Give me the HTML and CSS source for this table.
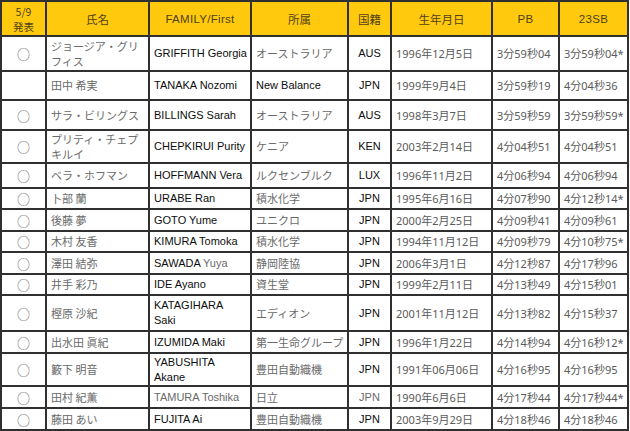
FILE: index.html
```html
<!DOCTYPE html>
<html lang="ja">
<head>
<meta charset="utf-8">
<title>5/9 発表</title>
<link rel="stylesheet" href="styles.css">
</head>
<body>
<table class="entry">
  <thead>
    <tr class="h35">
      <th class="c1 stack"><span class="ln">5/9</span><span class="ln">発表</span></th>
      <th class="c2">氏名</th>
      <th class="c3 lat">FAMILY/First</th>
      <th class="c4">所属</th>
      <th class="c5">国籍</th>
      <th class="c6">生年月日</th>
      <th class="c7 lat">PB</th>
      <th class="c8 lat">23SB</th>
    </tr>
  </thead>
  <tbody>
    <tr class="h35"><td class="mark">○</td><td class="jp">ジョージア・グリ<br>フィス</td><td class="lat">GRIFFITH Georgia</td><td class="jp">オーストラリア</td><td class="nat">AUS</td><td class="num">1996年12月5日</td><td class="num">3分59秒04</td><td class="num">3分59秒04*</td></tr>
    <tr class="h29"><td class="mark"></td><td class="jp">田中 希実</td><td class="lat">TANAKA Nozomi</td><td class="lat">New Balance</td><td class="nat">JPN</td><td class="num">1999年9月4日</td><td class="num">3分59秒19</td><td class="num">4分04秒36</td></tr>
    <tr class="h30"><td class="mark">○</td><td class="jp">サラ・ビリングス</td><td class="lat">BILLINGS Sarah</td><td class="jp">オーストラリア</td><td class="nat">AUS</td><td class="num">1998年3月7日</td><td class="num">3分59秒59</td><td class="num">3分59秒59*</td></tr>
    <tr class="h33"><td class="mark">○</td><td class="jp">プリティ・チェプ<br>キルイ</td><td class="lat">CHEPKIRUI Purity</td><td class="jp">ケニア</td><td class="nat">KEN</td><td class="num">2003年2月14日</td><td class="num">4分04秒51</td><td class="num">4分04秒51</td></tr>
    <tr class="h25"><td class="mark">○</td><td class="jp">ベラ・ホフマン</td><td class="lat">HOFFMANN Vera</td><td class="jp">ルクセンブルク</td><td class="nat">LUX</td><td class="num">1996年11月2日</td><td class="num">4分06秒94</td><td class="num">4分06秒94</td></tr>
    <tr class="h21"><td class="mark">○</td><td class="jp">卜部 蘭</td><td class="lat">URABE Ran</td><td class="jp">積水化学</td><td class="nat">JPN</td><td class="num">1995年6月16日</td><td class="num">4分07秒90</td><td class="num">4分12秒14*</td></tr>
    <tr class="h22"><td class="mark">○</td><td class="jp">後藤 夢</td><td class="lat">GOTO Yume</td><td class="jp">ユニクロ</td><td class="nat">JPN</td><td class="num">2000年2月25日</td><td class="num">4分09秒41</td><td class="num">4分09秒61</td></tr>
    <tr class="h21"><td class="mark">○</td><td class="jp">木村 友香</td><td class="lat">KIMURA Tomoka</td><td class="jp">積水化学</td><td class="nat">JPN</td><td class="num">1994年11月12日</td><td class="num">4分09秒79</td><td class="num">4分10秒75*</td></tr>
    <tr class="h22"><td class="mark">○</td><td class="jp">澤田 結弥</td><td class="lat">SAWADA <span class="soft">Yuya</span></td><td class="jp">静岡陸協</td><td class="nat">JPN</td><td class="num">2006年3月1日</td><td class="num">4分12秒87</td><td class="num">4分17秒96</td></tr>
    <tr class="h21"><td class="mark">○</td><td class="jp">井手 彩乃</td><td class="lat">IDE Ayano</td><td class="jp">資生堂</td><td class="nat">JPN</td><td class="num">1999年2月11日</td><td class="num">4分13秒49</td><td class="num">4分15秒01</td></tr>
    <tr class="h36"><td class="mark">○</td><td class="jp">樫原 沙紀</td><td class="lat">KATAGIHARA<br>Saki</td><td class="jp">エディオン</td><td class="nat">JPN</td><td class="num">2001年11月12日</td><td class="num">4分13秒82</td><td class="num">4分15秒37</td></tr>
    <tr class="h22"><td class="mark">○</td><td class="jp">出水田 眞紀</td><td class="lat">IZUMIDA Maki</td><td class="jp">第一生命グループ</td><td class="nat">JPN</td><td class="num">1996年1月22日</td><td class="num">4分14秒94</td><td class="num">4分16秒12*</td></tr>
    <tr class="h33"><td class="mark">○</td><td class="jp">籔下 明音</td><td class="lat">YABUSHITA<br>Akane</td><td class="jp">豊田自動織機</td><td class="nat">JPN</td><td class="num">1991年06月06日</td><td class="num">4分16秒95</td><td class="num">4分16秒95</td></tr>
    <tr class="h22"><td class="mark">○</td><td class="jp">田村 紀薫</td><td class="lat soft">TAMURA Toshika</td><td class="jp">日立</td><td class="nat soft">JPN</td><td class="num">1990年6月6日</td><td class="num">4分17秒44</td><td class="num">4分17秒44*</td></tr>
    <tr class="h22"><td class="mark">○</td><td class="jp">藤田 あい</td><td class="lat">FUJITA Ai</td><td class="jp">豊田自動織機</td><td class="nat">JPN</td><td class="num">2003年9月29日</td><td class="num">4分18秒46</td><td class="num">4分18秒46</td></tr>
  </tbody>
</table>
</body>
</html>
```

FILE: styles.css
```css
html, body {
  margin: 0;
  padding: 0;
  background: #ffffff;
}

body {
  font-family: "Noto Sans CJK JP", "Noto Sans", sans-serif;
}

.entry {
  border-spacing: 0;
  border-top: 2px solid #303030;
  border-left: 2px solid #303030;
  table-layout: fixed;
  width: 629px;
}

.entry th,
.entry td {
  box-sizing: border-box;
  border-right: 2px solid #303030;
  border-bottom: 2px solid #303030;
  padding: 0 4px;
  font-size: 11px;
  line-height: 15px;
  vertical-align: middle;
  white-space: nowrap;
  overflow: hidden;
}

.entry th {
  background: #ffc90e;
  color: #4f4216;
  font-weight: normal;
  text-align: center;
  font-size: 11.5px;
  line-height: 16px;
}

.entry th.stack {
  padding: 0;
  font-size: 10.5px;
  line-height: 15px;
}

.entry th.stack .ln {
  display: block;
  height: 15px;
  line-height: 15px;
}

.entry th.lat {
  font-family: "Liberation Sans", Arial, sans-serif;
  letter-spacing: 0.3px;
}

.c1 { width: 45px; }
.c2 { width: 103px; }
.c3 { width: 102px; }
.c4 { width: 97px; }
.c5 { width: 43px; }
.c6 { width: 101px; }
.c7 { width: 67px; }
.c8 { width: 69px; }

.h21 { height: 21px; }
.h22 { height: 22px; }
.h25 { height: 25px; }
.h29 { height: 29px; }
.h30 { height: 30px; }
.h33 { height: 33px; }
.h35 { height: 35px; }
.h36 { height: 36px; }

.entry td.mark {
  text-align: center;
  color: #6a6a6a;
  font-size: 13px;
  line-height: 15px;
}

.entry td.jp {
  color: #6a6a6a;
}

.entry td.lat {
  font-family: "Liberation Sans", Arial, sans-serif;
  color: #0d0d0d;
  font-size: 11px;
  line-height: 15px;
}

.entry td.nat {
  font-family: "Liberation Sans", Arial, sans-serif;
  color: #0d0d0d;
  text-align: center;
}

.entry td.num {
  font-family: "Noto Sans", "Noto Sans CJK JP", sans-serif;
  color: #5a5a5a;
}

.entry .soft,
.entry td.soft {
  color: #6a6a6a;
}
```
